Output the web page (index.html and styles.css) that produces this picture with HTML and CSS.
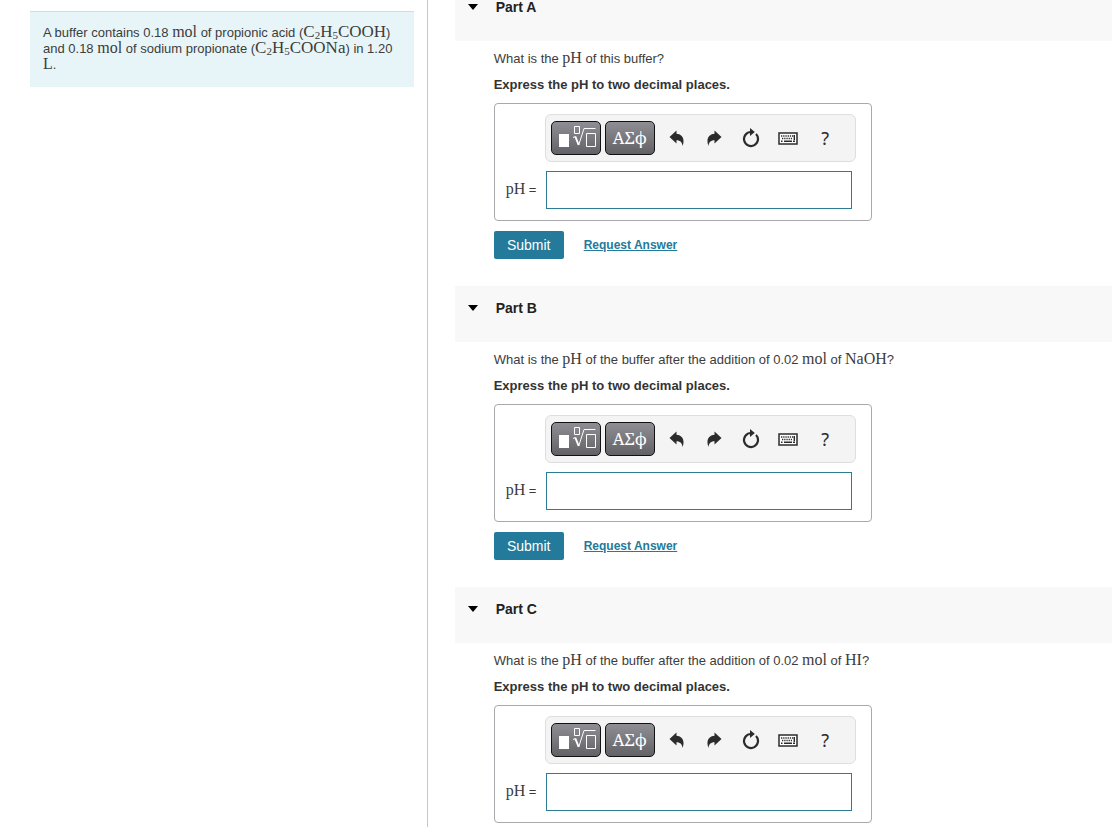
FILE: index.html
```html
<!DOCTYPE html>
<html lang="en">
  <head>
    <meta charset="utf-8">
    <title>Buffer Problem</title>
    <link rel="stylesheet" href="styles.css">
  </head>
  <body>
    <!-- Icons shared by the answer toolbars -->
    <svg class="icon-defs" aria-hidden="true">
      <symbol id="icon-root" viewBox="0 0 40 26">
        <rect x="3" y="10" width="10" height="13" fill="#fff" />
        <g fill="none" stroke="#fff">
          <path d="M18.500 2.500h5v7h-5z" />
          <path d="M30.500 9.500h9v13h-9z" />
          <path d="M17 13.500l2.500-1" />
          <path d="M22.700 21L28 4.500h11.500" />
          <path d="M19.300 12.500l3.400 8.500" stroke-width="2" />
        </g>
      </symbol>
      <symbol id="icon-undo" viewBox="0 0 16 16">
        <path d="M.5 7L7.500.500v3.300C12.500 4 16.500 8.500 13.500 16C13.300 12.500 11.500 10.200 7.500 10.200V13.500z" />
      </symbol>
      <symbol id="icon-redo" viewBox="0 0 16 16">
        <path d="M15.500 7L8.500.500v3.300C3.500 4-.5 8.500 2.500 16C2.700 12.500 4.500 10.200 8.500 10.200V13.500z" />
      </symbol>
      <symbol id="icon-reset" viewBox="0 0 18 20">
        <path d="M14 6.100A7 7 0 1 1 9 4" fill="none" stroke="#2b2b2b" stroke-width="2.200" />
        <path d="M8 0L12.800 4L8 8z" />
      </symbol>
      <symbol id="icon-keyboard" viewBox="0 0 20 14">
        <rect x="1" y="2" width="18" height="11" fill="#fff" stroke="#2b2b2b" stroke-width="1.500" />
        <path d="M3 5h14M4 7.500h10" fill="none" stroke="#2b2b2b" stroke-width="1.500" stroke-dasharray="1.300 .9" />
        <path d="M3 10.200h1.500M6 10.200h8M15 10.200h2M16.300 4v5" fill="none" stroke="#2b2b2b" stroke-width="1.400" />
      </symbol>
      <symbol id="icon-caret" viewBox="0 0 10 6">
        <path d="M0 0h10L5 6z" />
      </symbol>
    </svg>

    <div class="page">
      <!-- Problem statement -->
      <aside class="intro-column">
        <div class="intro">
          A buffer contains 0.18 <span class="math">mol</span> of propionic acid
          <span class="formula">(<span class="math">C<sub>2</sub>H<sub>5</sub>COOH</span>)</span> and 0.18
          <span class="math">mol</span> of sodium propionate
          <span class="formula">(<span class="math">C<sub>2</sub>H<sub>5</sub>COONa</span>)</span> in 1.20
          <span class="math">L</span>.
        </div>
      </aside>

      <!-- Parts -->
      <main class="parts">
        <section class="part">
          <h2 class="part-header"><svg class="caret"><use href="#icon-caret" /></svg>Part A</h2>
          <div class="part-body">
            <p class="question">What is the <span class="math">pH</span> of this buffer?</p>
            <p class="instructions">Express the pH to two decimal places.</p>
            <div class="answer">
              <div class="toolbar">
                <button type="button" class="tool-dark" aria-label="Templates"><svg class="root"><use href="#icon-root" /></svg></button>
                <button type="button" class="tool-dark">ΑΣϕ</button>
                <div class="tool-icons">
                  <button type="button" class="tool" aria-label="Undo"><svg class="arrow"><use href="#icon-undo" /></svg></button>
                  <button type="button" class="tool" aria-label="Redo"><svg class="arrow"><use href="#icon-redo" /></svg></button>
                  <button type="button" class="tool" aria-label="Reset"><svg class="reset"><use href="#icon-reset" /></svg></button>
                  <button type="button" class="tool" aria-label="Keyboard"><svg class="keyboard"><use href="#icon-keyboard" /></svg></button>
                  <button type="button" class="tool">?</button>
                </div>
              </div>
              <label class="answer-label" for="answer-a"><span class="math">pH</span> =</label>
              <input class="answer-input" type="text" id="answer-a">
            </div>
            <div class="actions">
              <button type="submit" class="submit">Submit</button>
              <a class="request" href="#">Request Answer</a>
            </div>
          </div>
        </section>

        <section class="part">
          <h2 class="part-header"><svg class="caret"><use href="#icon-caret" /></svg>Part B</h2>
          <div class="part-body">
            <p class="question">What is the <span class="math">pH</span> of the buffer after the addition of 0.02 <span class="math">mol</span> of <span class="math">NaOH</span>?</p>
            <p class="instructions">Express the pH to two decimal places.</p>
            <div class="answer">
              <div class="toolbar">
                <button type="button" class="tool-dark" aria-label="Templates"><svg class="root"><use href="#icon-root" /></svg></button>
                <button type="button" class="tool-dark">ΑΣϕ</button>
                <div class="tool-icons">
                  <button type="button" class="tool" aria-label="Undo"><svg class="arrow"><use href="#icon-undo" /></svg></button>
                  <button type="button" class="tool" aria-label="Redo"><svg class="arrow"><use href="#icon-redo" /></svg></button>
                  <button type="button" class="tool" aria-label="Reset"><svg class="reset"><use href="#icon-reset" /></svg></button>
                  <button type="button" class="tool" aria-label="Keyboard"><svg class="keyboard"><use href="#icon-keyboard" /></svg></button>
                  <button type="button" class="tool">?</button>
                </div>
              </div>
              <label class="answer-label" for="answer-b"><span class="math">pH</span> =</label>
              <input class="answer-input" type="text" id="answer-b">
            </div>
            <div class="actions">
              <button type="submit" class="submit">Submit</button>
              <a class="request" href="#">Request Answer</a>
            </div>
          </div>
        </section>

        <section class="part">
          <h2 class="part-header"><svg class="caret"><use href="#icon-caret" /></svg>Part C</h2>
          <div class="part-body">
            <p class="question">What is the <span class="math">pH</span> of the buffer after the addition of 0.02 <span class="math">mol</span> of <span class="math">HI</span>?</p>
            <p class="instructions">Express the pH to two decimal places.</p>
            <div class="answer">
              <div class="toolbar">
                <button type="button" class="tool-dark" aria-label="Templates"><svg class="root"><use href="#icon-root" /></svg></button>
                <button type="button" class="tool-dark">ΑΣϕ</button>
                <div class="tool-icons">
                  <button type="button" class="tool" aria-label="Undo"><svg class="arrow"><use href="#icon-undo" /></svg></button>
                  <button type="button" class="tool" aria-label="Redo"><svg class="arrow"><use href="#icon-redo" /></svg></button>
                  <button type="button" class="tool" aria-label="Reset"><svg class="reset"><use href="#icon-reset" /></svg></button>
                  <button type="button" class="tool" aria-label="Keyboard"><svg class="keyboard"><use href="#icon-keyboard" /></svg></button>
                  <button type="button" class="tool">?</button>
                </div>
              </div>
              <label class="answer-label" for="answer-c"><span class="math">pH</span> =</label>
              <input class="answer-input" type="text" id="answer-c">
            </div>
          </div>
        </section>
      </main>
    </div>
  </body>
</html>
```

FILE: styles.css
```css
* {
  box-sizing: border-box;
}
body {
  margin: 0;
  font-family: "Liberation Sans", Arial, sans-serif;
  font-size: 13px;
  line-height: 16px;
  color: #3c3c3c;
  background-color: #fff;
}
.icon-defs {
  display: none;
}
.page {
  display: grid;
  grid-template-columns: 5fr 8fr;
  height: 100vh;
  overflow: hidden;
}
.math {
  font-family: "Liberation Serif", "Times New Roman", serif;
  font-size: 16px;
  line-height: 1px;
}
.math sub {
  font-size: 11px;
  line-height: 1px;
  vertical-align: -2px;
}
.formula {
  white-space: nowrap;
}

/* Left column */
.intro-column {
  padding: 11px 13px 0 30px;
  border-right: 1px solid #c3c8cf;
}
.intro {
  padding: 13px 13px 14px;
  border-top: 1px solid #c9dfe3;
  background-color: #e8f5f8;
}
.formula .math {
  font-size: 17px;
}

/* Right column, the first header is cut off by the top of the pane */
.parts {
  min-width: 0;
  margin-top: -15px;
  padding-left: 27px;
}
.part-header {
  display: flex;
  align-items: center;
  gap: 18px;
  height: 56px;
  margin: 0;
  padding: 0 13px 12px;
  font-size: 14px;
  font-weight: bold;
  color: #222;
  background-color: #f8f8f8;
}
.caret {
  width: 10px;
  height: 6px;
}
.part-body {
  padding: 10px 39px 27px;
}
.question {
  margin: 0 0 10px;
}
.instructions {
  margin: 0 0 10px;
  font-weight: bold;
  color: #333;
}
.answer {
  display: grid;
  grid-template-columns: 50px 1fr;
  align-items: center;
  row-gap: 9px;
  max-width: 378px;
  padding: 10px 15px 11px 0;
  border: 1px solid #a9a9ad;
  border-radius: 4px;
}
.toolbar {
  grid-column: 2;
  display: flex;
  align-items: center;
  gap: 4px;
  height: 48px;
  padding: 0 5px;
  border: 1px solid #dedee0;
  border-radius: 6px;
  background-color: #f4f4f4;
}
.tool-dark {
  display: flex;
  align-items: center;
  justify-content: center;
  width: 50px;
  height: 34px;
  padding: 0 0 2px;
  border: 1px solid #111;
  border-radius: 5px;
  background: linear-gradient(#8e8e94, #626266);
  color: #fff;
  font-family: "Noto Serif", "DejaVu Serif", serif;
  font-size: 17px;
}
.tool-icons {
  display: flex;
}
.tool {
  display: flex;
  align-items: center;
  justify-content: center;
  width: 37px;
  height: 34px;
  padding: 0;
  border: none;
  background: none;
  color: #2b2b2b;
  font-family: "Noto Sans", sans-serif;
  font-size: 18px;
}
.tool svg {
  fill: #2b2b2b;
}
.root {
  width: 40px;
  height: 26px;
}
.arrow {
  width: 16px;
  height: 16px;
}
.reset {
  width: 18px;
  height: 20px;
}
.keyboard {
  width: 20px;
  height: 14px;
}
.answer-label {
  padding-left: 11px;
  white-space: nowrap;
}
.answer-input {
  height: 38px;
  margin: 0 4px 0 1px;
  padding: 0 8px;
  border: 1px solid #2d7c97;
  background-color: #fff;
  font-size: 16px;
}
.actions {
  display: flex;
  align-items: center;
  gap: 20px;
  margin-top: 10px;
}
.submit {
  width: 70px;
  height: 28px;
  padding: 0;
  border: none;
  border-radius: 2px;
  background-color: #237a9a;
  color: #fff;
  font-family: "Liberation Sans", Arial, sans-serif;
  font-size: 14px;
}
.request {
  font-size: 12px;
  font-weight: bold;
  color: #237a9a;
}
```
